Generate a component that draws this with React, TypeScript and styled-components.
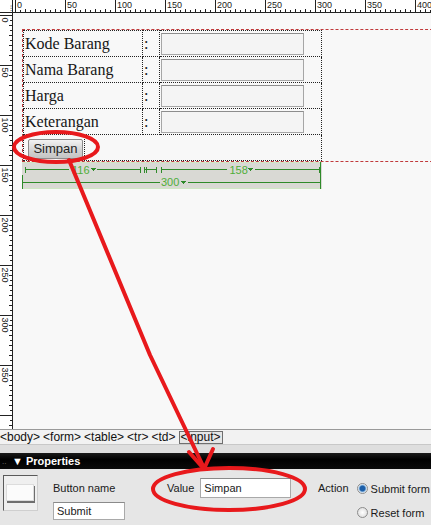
import React from 'react';
import styled, { createGlobalStyle } from 'styled-components';

const GlobalStyle = createGlobalStyle`
  html, body {
    margin: 0;
    padding: 0;
    background: #f8f8f8;
  }
`;

const Screen = styled.div`
  position: relative;
  width: 431px;
  height: 525px;
  overflow: hidden;
  display: flex;
  flex-direction: column;
  font-family: 'Liberation Sans', Arial, sans-serif;
  background: #f8f8f8;
`;

const RulerRow = styled.div`
  display: flex;
  height: 13px;
  flex: none;
`;

const Corner = styled.div`
  width: 13px;
  height: 13px;
  box-sizing: border-box;
  background: #fff;
  border-right: 1px solid #222;
  border-bottom: 1px solid #222;
  display: flex;
  align-items: flex-end;
  justify-content: flex-end;
  font-size: 8px;
  line-height: 6px;
  color: #333;
`;

const Workspace = styled.div`
  display: flex;
  height: 416px;
  flex: none;
`;

const Canvas = styled.div`
  flex: 1;
  background: #f8f8f8;
  padding: 16px 0 0 9px;
`;

const Form = styled.div`
  border-top: 1px dashed #c0393b;
  border-left: 1px dashed #c0393b;
  border-bottom: 1px dashed #c0393b;
  width: 420px;
`;

const Table = styled.table`
  border-collapse: collapse;
  width: 299px;
`;

const Cell = styled.td<{ $w?: number }>`
  border: 1px dotted #222;
  height: 25px;
  padding: 0 1px;
  ${({ $w }) => ($w ? `width: ${$w}px;` : '')}
  font-family: 'Liberation Serif', 'Times New Roman', serif;
  font-size: 16px;
  color: #151515;
  vertical-align: middle;
`;

const TextBox = styled.div`
  width: 143px;
  height: 22px;
  box-sizing: border-box;
  border: 1px solid #a6a6a6;
  border-top-color: #8d8d8d;
  background: #f4f4f4;
`;

const ButtonSpot = styled.span`
  display: inline-block;
  padding: 3px 1px 1px 3px;
  border-right: 1px dotted #222;
`;

const GrayButton = styled.div`
  width: 55px;
  height: 20px;
  box-sizing: border-box;
  border: 1px solid #8a8a8a;
  border-radius: 2px;
  background: linear-gradient(#f2f2f2, #d2d2d2 60%, #c4c4c4);
  font-family: 'Liberation Sans', Arial, sans-serif;
  font-size: 13px;
  line-height: 18px;
  text-align: center;
  color: #222;
`;

const Guides = styled.div`
  width: 300px;
  height: 27px;
  background: #d9d9d4;
  box-shadow: inset 0 -1px 0 #cfe7c4, inset 0 1px 0 #cfe7c4;
`;

const TagBar = styled.div`
  height: 15px;
  flex: none;
  box-sizing: border-box;
  border-top: 1px solid #9a9a9a;
  background: #f2f2f2;
  display: flex;
  align-items: center;
  gap: 3px;
  font-family: 'Liberation Sans', Arial, sans-serif;
  font-size: 12px;
  color: #111;
  white-space: nowrap;
`;

const Tag = styled.span<{ $active?: boolean }>`
  ${({ $active }) =>
    $active
      ? `border: 1px solid #6f6f6f; background: #e6e6e6; padding: 0 1px; line-height: 11px;`
      : ''}
`;

const Divider = styled.div`
  height: 9px;
  flex: none;
  background: #dedede;
  border-top: 1px solid #c8c8c8;
  box-sizing: border-box;
`;

const PanelHeader = styled.div`
  height: 16px;
  flex: none;
  background: linear-gradient(#1a1a1a, #000 40%, #0a0a0a);
  color: #fff;
  display: flex;
  align-items: center;
  gap: 3px;
  padding-left: 2px;
  font-family: 'Liberation Sans', Arial, sans-serif;
  font-size: 11px;
  font-weight: bold;
`;

const Grip = styled.span`
  color: #777;
  font-size: 8px;
  font-weight: normal;
  width: 7px;
`;

const PanelBody = styled.div`
  flex: 1;
  background: #e6e6e6;
  display: flex;
  font-family: 'Liberation Sans', Arial, sans-serif;
  font-size: 11px;
  color: #1a1a1a;
  white-space: nowrap;

  & > * {
    flex: none;
  }
`;

const IconBox = styled.div`
  margin: 6px 0 0 3px;
  width: 35px;
  height: 36px;
  box-sizing: border-box;
  border: 1px solid #5a5a5a;
  border-right-color: #cfcfcf;
  border-bottom-color: #cfcfcf;
  background: #efefef;
  display: flex;
  align-items: center;
  justify-content: center;
`;

const IconButton = styled.div`
  width: 26px;
  height: 15px;
  background: #fbfbfb;
  border: 1px solid #dcdcdc;
  box-shadow: 1px 2px 0 #6e6e6e;
  margin: 0 1px 2px 0;
`;

const NameCol = styled.div`
  margin-left: 15px;
  width: 114px;
  padding-top: 13px;
  display: flex;
  flex-direction: column;
  gap: 8px;
`;

const Field = styled.div<{ $w: number; $h: number }>`
  width: ${({ $w }) => $w}px;
  height: ${({ $h }) => $h}px;
  box-sizing: border-box;
  border: 1px solid #a9a9a9;
  border-top-color: #8a8a8a;
  background: #fff;
  padding-left: 3px;
  line-height: ${({ $h }) => $h - 2}px;
`;

const ValueGroup = styled.div`
  display: flex;
  align-items: center;
  gap: 6px;
  height: 20px;
  margin-top: 9px;
  width: 151px;
`;

const ActionGroup = styled.div`
  display: flex;
  gap: 8px;
  padding-top: 13px;
`;

const RadioList = styled.div`
  display: flex;
  flex-direction: column;
  gap: 11px;
`;

const RadioRow = styled.div`
  display: flex;
  align-items: center;
  gap: 3px;
  height: 13px;
`;

const Radio = styled.span<{ $on?: boolean }>`
  width: 11px;
  height: 11px;
  border-radius: 50%;
  box-sizing: border-box;
  border: 1px solid #8c8c8c;
  background: ${({ $on }) =>
    $on
      ? 'radial-gradient(circle, #1e5fa8 0 2.5px, #9cc3e6 3.5px, #f4f4f4 4.5px)'
      : 'radial-gradient(circle, #fff, #d6d6d6)'};
`;

const Overlay = styled.svg`
  position: absolute;
  left: 0;
  top: 0;
  pointer-events: none;
`;

const HRuler = () => {
  const ticks = [];
  for (let v = 0; v <= 420; v += 5) {
    const x = v + 2.5;
    const len = v % 50 === 0 ? 13 : v % 10 === 0 ? 4 : 3;
    ticks.push(<line key={v} x1={x} x2={x} y1={13 - len} y2={13} stroke="#222" strokeWidth={1} />);
    if (v % 50 === 0)
      ticks.push(
        <text key={'t' + v} x={x + 1.5} y={8} fontSize={9} fontFamily="Liberation Sans, Arial, sans-serif" fill="#222">
          {v}
        </text>
      );
  }
  return (
    <svg width={418} height={13} style={{ display: 'block', background: '#fff' }}>
      {ticks}
      <line x1={0} x2={418} y1={12.5} y2={12.5} stroke="#222" />
    </svg>
  );
};

const VRuler = () => {
  const ticks = [];
  for (let v = 0; v <= 415; v += 5) {
    const y = v + 2.5;
    const len = v % 50 === 0 ? 13 : v % 10 === 0 ? 4 : 3;
    ticks.push(<line key={v} x1={13 - len} x2={13} y1={y} y2={y} stroke="#222" strokeWidth={1} />);
    if (v % 50 === 0 && v < 400)
      ticks.push(
        <text
          key={'t' + v}
          x={0}
          y={0}
          fontSize={9}
          fontFamily="Liberation Sans, Arial, sans-serif"
          fill="#222"
          transform={`translate(1.5 ${y + 2}) rotate(90)`}
        >
          {v}
        </text>
      );
  }
  return (
    <svg width={13} height={416} style={{ display: 'block', background: '#fff', flex: 'none' }}>
      {ticks}
      <line x1={12.5} x2={12.5} y1={0} y2={416} stroke="#222" />
    </svg>
  );
};

const green = '#2f8a2a';
const greenText = '#4fae39';

const Span = ({ a, b, y, label }: { a: number; b: number; y: number; label?: string }) => {
  const mid = (a + b) / 2;
  const half = label ? 14 : 0;
  return (
    <g stroke={green}>
      <line x1={a} x2={a} y1={y - 3} y2={y + 3} />
      <line x1={b} x2={b} y1={y - 3} y2={y + 3} />
      {label ? (
        <>
          <line x1={a} x2={mid - half} y1={y} y2={y} />
          <line x1={mid + half} x2={b} y1={y} y2={y} />
          <text x={mid - 11} y={y + 4} fontSize={11} fill={greenText} stroke="none" fontFamily="Liberation Sans, Arial, sans-serif">
            {label}
          </text>
          <path d={`M${mid + 7} ${y - 1.5} l6 0 l-3 3 z`} fill={green} stroke="none" />
        </>
      ) : (
        <line x1={a} x2={b} y1={y} y2={y} />
      )}
    </g>
  );
};

const WidthGuides = () => (
  <Guides>
    <svg width={300} height={27} style={{ display: 'block' }} shapeRendering="crispEdges">
      <Span a={3.5} b={118.5} y={7.5} label="116" />
      <Span a={122.5} b={124.5} y={7.5} />
      <Span a={124.5} b={134.5} y={7.5} />
      <Span a={139.5} b={297.5} y={7.5} label="158" />
      <g stroke={green}>
        <line x1={0.5} x2={0.5} y1={13} y2={27} />
        <line x1={298.5} x2={298.5} y1={0} y2={27} />
        <line x1={0.5} x2={138} y1={20.5} y2={20.5} />
        <line x1={166} x2={298.5} y1={20.5} y2={20.5} />
      </g>
      <text x={139} y={24} fontSize={11} fill={greenText} fontFamily="Liberation Sans, Arial, sans-serif">
        300
      </text>
      <path d="M158 19 l6 0 l-3 3 z" fill={green} />
    </svg>
  </Guides>
);

const fields = ['Kode Barang', 'Nama Barang', 'Harga', 'Keterangan'];

export default function App() {
  return (
    <Screen>
      <GlobalStyle />
      <RulerRow>
        <Corner>⁝</Corner>
        <HRuler />
      </RulerRow>
      <Workspace>
        <VRuler />
        <Canvas>
          <Form>
            <Table>
              <tbody>
                {fields.map((f) => (
                  <tr key={f}>
                    <Cell $w={116}>{f}</Cell>
                    <Cell $w={14}>:</Cell>
                    <Cell>
                      <TextBox />
                    </Cell>
                  </tr>
                ))}
                <tr>
                  <Cell colSpan={3}>
                    <ButtonSpot>
                      <GrayButton>Simpan</GrayButton>
                    </ButtonSpot>
                  </Cell>
                </tr>
              </tbody>
            </Table>
          </Form>
          <WidthGuides />
        </Canvas>
      </Workspace>
      <TagBar>
        <Tag>&lt;body&gt;</Tag>
        <Tag>&lt;form&gt;</Tag>
        <Tag>&lt;table&gt;</Tag>
        <Tag>&lt;tr&gt;</Tag>
        <Tag>&lt;td&gt;</Tag>
        <Tag $active>&lt;input&gt;</Tag>
      </TagBar>
      <Divider />
      <PanelHeader>
        <Grip>..</Grip>
        <span>▼ Properties</span>
      </PanelHeader>
      <PanelBody>
        <IconBox>
          <IconButton />
        </IconBox>
        <NameCol>
          <span>Button name</span>
          <Field $w={72} $h={18}>Submit</Field>
        </NameCol>
        <ValueGroup>
          <span>Value</span>
          <Field $w={91} $h={20}>Simpan</Field>
        </ValueGroup>
        <ActionGroup>
          <span>Action</span>
          <RadioList>
            <RadioRow>
              <Radio $on />
              <span>Submit form</span>
            </RadioRow>
            <RadioRow>
              <Radio />
              <span>Reset form</span>
            </RadioRow>
          </RadioList>
        </ActionGroup>
      </PanelBody>
      <Overlay width={431} height={525} viewBox="0 0 431 525">
        <g fill="none" stroke="#e8191c" strokeWidth={4} strokeLinecap="round" strokeLinejoin="round">
          <ellipse cx={56} cy={147} rx={42} ry={15} />
          <path d="M69 160 L150 355 L204 468" />
          <path d="M189 452 L204 469 L213 449" />
          <ellipse cx={229} cy={489} rx={76} ry={21} />
        </g>
      </Overlay>
    </Screen>
  );
}
